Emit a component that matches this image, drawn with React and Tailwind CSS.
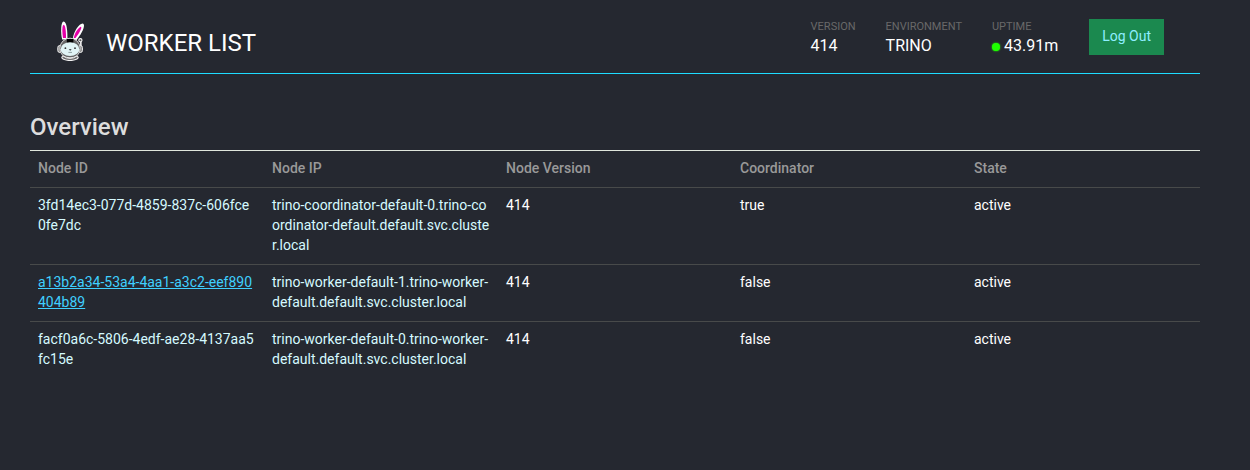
import React from 'react';

const stats = [
  { label: 'Version', value: '414' },
  { label: 'Environment', value: 'TRINO' },
  { label: 'Uptime', value: '43.91m', live: true },
];

const columns = ['Node ID', 'Node IP', 'Node Version', 'Coordinator', 'State'];

const workers = [
  {
    id: '3fd14ec3-077d-4859-837c-606fce0fe7dc',
    ip: 'trino-coordinator-default-0.trino-coordinator-default.default.svc.cluster.local',
    version: '414',
    coordinator: true,
    state: 'active',
  },
  {
    id: 'a13b2a34-53a4-4aa1-a3c2-eef890404b89',
    ip: 'trino-worker-default-1.trino-worker-default.default.svc.cluster.local',
    version: '414',
    coordinator: false,
    state: 'active',
    highlighted: true,
  },
  {
    id: 'facf0a6c-5806-4edf-ae28-4137aa5fc15e',
    ip: 'trino-worker-default-0.trino-worker-default.default.svc.cluster.local',
    version: '414',
    coordinator: false,
    state: 'active',
  },
];

const Logo = () => (
  <svg viewBox="0 0 28 40" className="w-7 h-10" aria-hidden="true">
    {/* Ears */}
    <path d="M5.2 18.5C3.6 13 3.6 0.6 6.6 0.4C9.8 0.6 10.6 10 10.4 18.5Z" fill="#fff" />
    <path d="M15.8 18.5C16.3 11 21.8 3 25.6 2.6C29.4 3.8 24.8 12.5 19.6 19Z" fill="#fff" />
    <path d="M6 17C5 11 5 4 6.7 3.8C8.5 4 9.1 11 9 17Z" fill="#e600a8" />
    <path d="M16.8 17C17.6 11.5 21.8 6.2 24 5.8C25.4 7 21.6 13 18.6 17Z" fill="#e600a8" />
    {/* Antenna */}
    <path d="M23.8 26V20.5" stroke="#e8e8e8" strokeWidth="1.8" />
    <circle cx="23.4" cy="19.2" r="1.6" fill="#555" stroke="#f4f4f4" strokeWidth="1.1" />
    {/* Helmet */}
    <ellipse cx="13" cy="36.4" rx="8.2" ry="3.1" fill="#6b6b6b" stroke="#f4f4f4" strokeWidth="1.1" />
    <rect x="0.8" y="24.5" width="4" height="7" rx="2" fill="#888" stroke="#f4f4f4" strokeWidth="1" />
    <rect x="21.4" y="24.5" width="4" height="7" rx="2" fill="#888" stroke="#f4f4f4" strokeWidth="1" />
    <circle cx="13" cy="27.4" r="10.2" fill="#666" stroke="#d4d4d4" strokeWidth="1" />
    <path d="M6 35Q13 38.6 20 35" fill="none" stroke="#e8e8e8" strokeWidth="1" />
    <rect x="9.8" y="18" width="6.6" height="4" fill="#000" />
    {/* Face */}
    <ellipse cx="13" cy="28.2" rx="9.4" ry="6.9" fill="#e1f4f5" />
    <circle cx="8.4" cy="27.2" r="0.9" fill="#333" />
    <circle cx="18" cy="27.2" r="0.9" fill="#333" />
    <path d="M11.8 28.3H14.6L13.2 29.8Z" fill="#222" />
    <path d="M11.4 31.4H15" stroke="#7c8a8c" strokeWidth="0.8" />
  </svg>
);

const Stat = ({ label, value, live }) => (
  <div>
    <dt className="text-[11px] leading-4 uppercase text-[#696969]">{label}</dt>
    <dd className="flex items-center text-base leading-5 mt-px">
      {live && <span className="w-2 h-2 mr-1 mt-0.5 rounded-full bg-[#1eff00] shadow-[0_0_2px_#1eff00]" />}
      {value}
    </dd>
  </div>
);

const App = () => {
  return (
    <div className="min-h-screen bg-[#252830] pl-[30px] pr-[50px] text-sm leading-5 text-white font-['Roboto',sans-serif]">
      {/* Header */}
      <header className="flex items-start justify-between h-[74px] pl-[27px] pr-9 border-b border-[#1edcff]">
        <div className="flex items-start gap-[21px] pt-[21px]">
          <Logo />
          <span className="text-2xl leading-11">WORKER LIST</span>
        </div>
        <div className="flex items-start gap-[31px] pt-[19px]">
          <dl className="flex gap-[30px]">
            {stats.map((stat) => (
              <Stat key={stat.label} {...stat} />
            ))}
          </dl>
          <button type="button" className="h-9 px-[13px] pb-0.5 bg-[#1b894f] text-[#8fefff]">
            Log Out
          </button>
        </div>
      </header>

      {/* Workers */}
      <main className="pt-[39px]">
        <h1 className="text-2xl leading-7 font-medium text-[#ddd]">Overview</h1>
        <table className="w-full mt-[9px] table-fixed border-t border-[#e0e6dc]">
          <thead>
            <tr>
              {columns.map((column) => (
                <th key={column} scope="col" className="px-2 pt-[7px] pb-[9px] text-left font-medium text-[#999]">
                  {column}
                </th>
              ))}
            </tr>
          </thead>
          <tbody>
            {workers.map((worker) => (
              <tr key={worker.id} className="border-t border-[#484a4a] align-top break-all">
                <td className="px-2 pt-[7px] pb-[9px]">
                  <a href="#worker" className={worker.highlighted ? 'text-[#3fd0ff] underline' : 'text-[#d5faff]'}>
                    {worker.id}
                  </a>
                </td>
                <td className="px-2 pt-[7px] pb-[9px]">
                  <a href="#worker" className="text-[#d5faff]">
                    {worker.ip}
                  </a>
                </td>
                <td className="px-2 pt-[7px] pb-[9px]">{worker.version}</td>
                <td className="px-2 pt-[7px] pb-[9px]">{String(worker.coordinator)}</td>
                <td className="px-2 pt-[7px] pb-[9px]">{worker.state}</td>
              </tr>
            ))}
          </tbody>
        </table>
      </main>
    </div>
  );
};

export default App;
